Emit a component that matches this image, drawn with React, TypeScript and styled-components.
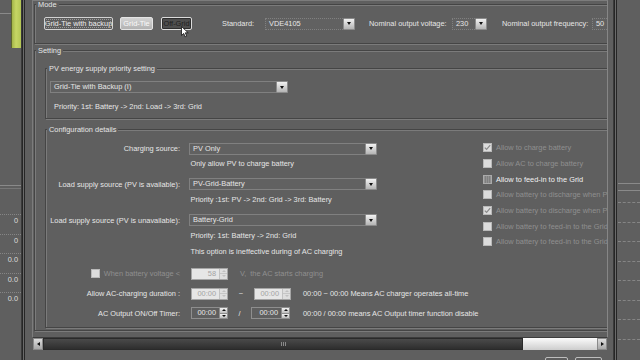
import styled, { createGlobalStyle, css } from "styled-components"

const C = {
	bg: "#5f5f5f",
	dark: "#454545",
	light: "#7b7b7b",
	text: "#e6e6e6",
	muted: "#8f8f8f",
}

const GlobalStyle = createGlobalStyle`
	* { box-sizing: border-box; }
	html, body { margin: 0; padding: 0; background: ${C.bg}; }
	body {
		font-family: "Liberation Sans", Arial, sans-serif;
		font-size: 7.4px;
		color: ${C.text};
		overflow: hidden;
	}
`

const s = {
	Page: styled.div`
		display: flex;
		width: 640px;
		height: 360px;
		overflow: hidden;
		background: ${C.bg};
	`,

	LeftStrip: styled.div`
		width: 21px;
		flex: none;
		display: flex;
		flex-direction: column;
	`,

	LeftTop: styled.div`
		display: flex;
		height: 48px;
		flex: none;
	`,

	TopCell: styled.div`
		width: 11px;
		height: 14px;
		border-bottom: 1px solid #8a8a8a;
	`,

	GreenBar: styled.div`
		width: 10px;
		height: 48px;
		border-left: 1px solid #5d652e;
		background: linear-gradient(to right, #a3b448, #c6d664 45%, #b3c554);
	`,

	LeftHeader: styled.div`
		margin-top: 137px;
		height: 4px;
		border-top: 1px solid #8a8a8a;
		border-bottom: 1px solid #777;
	`,

	LeftRows: styled.div`
		margin-top: 25px;
	`,

	LeftCell: styled.div`
		height: 19.5px;
		border-top: 1px dotted #858585;
		text-align: right;
		padding-right: 3px;
		line-height: 11px;
		color: #dcdcdc;
	`,

	Splitter: styled.div<{ $w: number; $o: number }>`
		width: ${p => p.$w}px;
		flex: none;
		background: linear-gradient(to right,
			transparent 0 ${p => p.$o}px,
			#3a3a3a ${p => p.$o}px ${p => p.$o + 1}px,
			#262626 ${p => p.$o + 1}px ${p => p.$o + 2}px,
			#6a6a6a ${p => p.$o + 2}px ${p => p.$o + 3}px,
			#262626 ${p => p.$o + 3}px ${p => p.$o + 4}px,
			transparent ${p => p.$o + 4}px);
	`,

	MainColumn: styled.div`
		width: 576px;
		flex: none;
		display: flex;
		flex-direction: column;
	`,

	Viewport: styled.div`
		position: relative;
		height: 337px;
		flex: none;
		overflow: hidden;
		border-top: 1px solid #7c7c7c;
		border-left: 1px solid #7c7c7c;
		border-right: 1px solid #868686;
	`,

	Content: styled.div`
		width: 663px;
	`,

	Group: styled.fieldset<{ $mt?: number; $ml?: number }>`
		margin: ${p => p.$mt ?? 0}px 0 0 ${p => p.$ml ?? 0}px;
		padding: 0;
		min-width: 0;
		border: 1px solid ${C.dark};
		box-shadow: inset 1px 1px 0 ${C.light}, 1px 1px 0 ${C.light};
	`,

	Legend: styled.legend`
		margin-left: 1px;
		padding: 0 2px;
		line-height: 9px;
		background: ${C.bg};
		color: ${C.text};
	`,

	ModeRow: styled.div`
		display: flex;
		align-items: center;
		padding: 8px 0 13px 9px;
	`,

	ModeButton: styled.div<{ $variant: "focus" | "plain" | "pressed"; $w: number; $ml?: number }>`
		width: ${p => p.$w}px;
		height: 13px;
		margin-left: ${p => p.$ml ?? 0}px;
		flex: none;
		display: flex;
		align-items: center;
		justify-content: center;
		border-radius: 2px;
		white-space: nowrap;
		${p => p.$variant === "focus" && css`
			border: 1px solid #d2d2d2;
			background: #5c5c5c;
			color: #eeeeee;
			outline: 1px dotted #9a9a9a;
			outline-offset: -3px;
		`}
		${p => p.$variant === "plain" && css`
			border: 1px solid #e4e4e4;
			background: linear-gradient(#d4d4d4, #b2b2b2);
			color: #fafafa;
		`}
		${p => p.$variant === "pressed" && css`
			border: 1px solid #dcdcdc;
			box-shadow: inset 0 0 0 1px #2e2e2e;
			background: #4e4e4e;
			color: #1e1e1e;
		`}
	`,

	ModeLabel: styled.span<{ $w: number; $ml?: number }>`
		width: ${p => p.$w}px;
		margin-left: ${p => p.$ml ?? 0}px;
		flex: none;
		white-space: nowrap;
	`,

	Select: styled.div<{ $w: number; $dotted?: boolean }>`
		display: flex;
		align-items: center;
		flex: none;
		width: ${p => p.$w}px;
		height: 12px;
		border: 1px ${p => (p.$dotted ? "dotted" : "solid")} #808080;
		background: #616161;
		color: ${C.text};
	`,

	SelectValue: styled.span`
		flex: 1;
		padding-left: 3px;
		line-height: 10px;
		white-space: nowrap;
		overflow: hidden;
	`,

	DropButton: styled.span`
		width: 12px;
		height: 12px;
		margin: -1px -1px -1px 0;
		flex: none;
		display: flex;
		align-items: center;
		justify-content: center;
		border: 1px solid #8c8c8c;
		border-radius: 1px;
		background: linear-gradient(#f2f2f2, #b4b4b4);

		&::after {
			content: "";
			border-left: 2.5px solid transparent;
			border-right: 2.5px solid transparent;
			border-top: 3px solid #111;
		}
	`,

	SettingBody: styled.div`
		padding: 0 0 2px 10px;
	`,

	PVBody: styled.div`
		padding: 8.5px 0 7.5px 4px;
	`,

	Note: styled.div<{ $pl?: number; $mt?: number; $muted?: boolean }>`
		padding-left: ${p => p.$pl ?? 0}px;
		margin-top: ${p => p.$mt ?? 0}px;
		line-height: 9px;
		white-space: nowrap;
		color: ${p => (p.$muted ? C.muted : C.text)};
	`,

	ConfigBody: styled.div`
		display: flex;
		padding: 9px 0 8px 0;
	`,

	Form: styled.div`
		width: 437px;
		flex: none;
	`,

	FormRow: styled.div<{ $h?: number; $mt?: number }>`
		display: flex;
		align-items: center;
		height: ${p => p.$h ?? 12}px;
		margin-top: ${p => p.$mt ?? 0}px;
		white-space: nowrap;
	`,

	RowLabel: styled.div<{ $muted?: boolean }>`
		width: 134px;
		margin-right: 9px;
		flex: none;
		display: flex;
		align-items: center;
		justify-content: flex-end;
		gap: 4px;
		color: ${p => (p.$muted ? C.muted : C.text)};
	`,

	Inline: styled.span<{ $ml?: number; $w?: number; $muted?: boolean }>`
		margin-left: ${p => p.$ml ?? 0}px;
		${p => p.$w && css`width: ${p.$w}px; text-align: center;`}
		flex: none;
		color: ${p => (p.$muted ? C.muted : C.text)};
	`,

	Spinner: styled.div<{ $w: number; $ml?: number; $dark?: boolean }>`
		display: flex;
		flex: none;
		width: ${p => p.$w}px;
		height: 12px;
		margin-left: ${p => p.$ml ?? 0}px;
		border: 1px solid ${p => (p.$dark ? "#8e8e8e" : "#a6a6a6")};
		background: ${p => (p.$dark ? C.bg : "#e6e6e6")};
	`,

	SpinValue: styled.span<{ $dark?: boolean }>`
		flex: 1;
		text-align: right;
		padding-right: 3px;
		line-height: 10px;
		color: ${p => (p.$dark ? C.text : "#a3a3a3")};
	`,

	SpinButtons: styled.span<{ $dark?: boolean }>`
		width: 8px;
		flex: none;
		display: flex;
		flex-direction: column;
		border-left: 1px solid ${p => (p.$dark ? "#8e8e8e" : "#c2c2c2")};
	`,

	SpinArrow: styled.span<{ $up?: boolean; $dark?: boolean }>`
		flex: 1;
		display: flex;
		align-items: center;
		justify-content: center;
		background: ${p => (p.$dark ? "linear-gradient(#f2f2f2, #bdbdbd)" : "#dedede")};
		border-top: ${p => (p.$up ? "none" : `1px solid ${p.$dark ? "#8e8e8e" : "#c6c6c6"}`)};

		&::after {
			content: "";
			border-left: 2px solid transparent;
			border-right: 2px solid transparent;
			${p => (p.$up ? "border-bottom" : "border-top")}: 2px solid ${p => (p.$dark ? "#111" : "#c0c0c0")};
		}
	`,

	CheckList: styled.div`
		margin-top: -2.5px;
		display: flex;
		flex-direction: column;
	`,

	CheckItem: styled.div<{ $enabled?: boolean }>`
		height: 15.67px;
		display: flex;
		align-items: center;
		gap: 4px;
		white-space: nowrap;
		color: ${p => (p.$enabled ? "#f2f2f2" : C.muted)};
	`,

	Box: styled.span<{ $enabled?: boolean }>`
		width: 9px;
		height: 9px;
		flex: none;
		display: flex;
		align-items: center;
		justify-content: center;
		border: 1px solid ${p => (p.$enabled ? "#aaaaaa" : "#b9b9b9")};
		background: ${p => (p.$enabled
			? "repeating-linear-gradient(to right, #929292 0 1px, #7f7f7f 1px 2px)"
			: "#dcdcdc")};
	`,

	Cursor: styled.svg`
		position: absolute;
		left: 148px;
		top: 25px;
		width: 8px;
		height: 12px;
	`,

	ScrollBar: styled.div`
		display: flex;
		height: 13px;
		margin-left: 1px;
		width: 574px;
		flex: none;
		border-top: 1px solid #3c3c3c;
	`,

	ScrollButton: styled.div<{ $dir: "left" | "right" }>`
		width: 10px;
		flex: none;
		display: flex;
		align-items: center;
		justify-content: center;
		border: 1px solid #8a8a8a;
		background: linear-gradient(#dcdcdc, #a8a8a8);

		&::after {
			content: "";
			border-top: 2.5px solid transparent;
			border-bottom: 2.5px solid transparent;
			${p => (p.$dir === "left" ? "border-right" : "border-left")}: 3px solid #111;
		}
	`,

	Thumb: styled.div`
		width: 480px;
		flex: none;
		display: flex;
		align-items: center;
		justify-content: center;
		border: 1px solid #2a2a2a;
		background: linear-gradient(#4a4a4a, #2e2e2e);

		&::after {
			content: "";
			width: 5px;
			height: 4px;
			background: repeating-linear-gradient(to right, #8a8a8a 0 1px, transparent 1px 2px);
		}
	`,

	Track: styled.div`
		flex: 1;
		background: linear-gradient(#fbfbfb, #cdcdcd);
	`,

	BottomBar: styled.div`
		flex: 1;
		display: flex;
		justify-content: flex-end;
		gap: 7px;
		padding: 7px 6px 0 0;
	`,

	DialogButton: styled.div<{ $w: number }>`
		width: ${p => p.$w}px;
		height: 14px;
		border: 1px solid #bdbdbd;
		border-radius: 2px;
		background: #5c5c5c;
	`,

	RightStrip: styled.div`
		flex: 1;
		display: flex;
		flex-direction: column;
		padding-top: 183px;
	`,

	RightRule: styled.div<{ $mt?: number }>`
		height: 1px;
		margin-top: ${p => p.$mt ?? 0}px;
		background: #8a8a8a;
	`,

	RightRows: styled.div`
		margin-top: 11px;
	`,

	RightRow: styled.div`
		height: 19.5px;
		border-top: 1px dashed #858585;
	`,
}

const checks = [
	{ label: "Allow to charge battery", checked: true },
	{ label: "Allow AC to charge battery" },
	{ label: "Allow to feed-in to the Grid", enabled: true },
	{ label: "Allow battery to discharge when PV is unavailable" },
	{ label: "Allow battery to discharge when PV is available", checked: true },
	{ label: "Allow battery to feed-in to the Grid when PV is available" },
	{ label: "Allow battery to feed-in to the Grid when PV is unavailable" },
]

function Select({ w, value, dotted }: { w: number; value: string; dotted?: boolean }) {
	return (
		<s.Select $w={w} $dotted={dotted}>
			<s.SelectValue>{value}</s.SelectValue>
			<s.DropButton />
		</s.Select>
	)
}

function Spinner({ w, value, dark, ml }: { w: number; value: string; dark?: boolean; ml?: number }) {
	return (
		<s.Spinner $w={w} $dark={dark} $ml={ml}>
			<s.SpinValue $dark={dark}>{value}</s.SpinValue>
			<s.SpinButtons $dark={dark}>
				<s.SpinArrow $up $dark={dark} />
				<s.SpinArrow $dark={dark} />
			</s.SpinButtons>
		</s.Spinner>
	)
}

function Check({ checked, enabled }: { checked?: boolean; enabled?: boolean }) {
	return (
		<s.Box $enabled={enabled}>
			{checked && (
				<svg width="7" height="7" viewBox="0 0 7 7">
					<path d="M0.8 3.6 L2.6 5.4 L6.2 1.2" fill="none" stroke="#8a8a8a" strokeWidth="1.2" />
				</svg>
			)}
		</s.Box>
	)
}

export default function App() {
	return (
		<>
			<GlobalStyle />
			<s.Page>
				<s.LeftStrip>
					<s.LeftTop>
						<s.TopCell />
						<s.GreenBar />
					</s.LeftTop>
					<s.LeftHeader />
					<s.LeftRows>
						{["0", "0", "0.0", "0.0", "0.0"].map((v, i) => (
							<s.LeftCell key={i}>{v}</s.LeftCell>
						))}
					</s.LeftRows>
				</s.LeftStrip>

				<s.Splitter $w={11} $o={0} />

				<s.MainColumn>
					<s.Viewport>
						<s.Content>
							<s.Group $mt={-1} $ml={1}>
								<s.Legend>Mode</s.Legend>
								<s.ModeRow>
									<s.ModeButton $variant="focus" $w={69}>Grid-Tie with backup</s.ModeButton>
									<s.ModeButton $variant="plain" $w={33} $ml={7}>Grid-Tie</s.ModeButton>
									<s.ModeButton $variant="pressed" $w={31} $ml={8}>Off-Grid</s.ModeButton>
									<s.ModeLabel $w={43} $ml={30}>Standard:</s.ModeLabel>
									<Select w={90} value="VDE4105" dotted />
									<s.ModeLabel $w={83} $ml={14}>Nominal output voltage:</s.ModeLabel>
									<Select w={35} value="230" dotted />
									<s.ModeLabel $w={90} $ml={15}>Nominal output frequency:</s.ModeLabel>
									<Select w={35} value="50" dotted />
								</s.ModeRow>
							</s.Group>

							<s.Group $mt={2} $ml={1}>
								<s.Legend>Setting</s.Legend>
								<s.SettingBody>
									<s.Group $mt={8.5}>
										<s.Legend>PV energy supply priority setting</s.Legend>
										<s.PVBody>
											<Select w={238} value="Grid-Tie with Backup (I)" />
											<s.Note $pl={4} $mt={8.5}>Priority: 1st: Battery -&gt; 2nd: Load -&gt; 3rd: Grid</s.Note>
										</s.PVBody>
									</s.Group>

									<s.Group $mt={5.5}>
										<s.Legend>Configuration details</s.Legend>
										<s.ConfigBody>
											<s.Form>
												<s.FormRow>
													<s.RowLabel>Charging source:</s.RowLabel>
													<Select w={188} value="PV Only" />
												</s.FormRow>
												<s.FormRow $h={16} $mt={0.5}>
													<s.RowLabel />
													<s.Note $pl={1.5}>Only allow PV to charge battery</s.Note>
												</s.FormRow>
												<s.FormRow $mt={7}>
													<s.RowLabel>Load supply source (PV is available):</s.RowLabel>
													<Select w={188} value="PV-Grid-Battery" />
												</s.FormRow>
												<s.FormRow $h={16} $mt={1.5}>
													<s.RowLabel />
													<s.Note $pl={1.5}>Priority :1st: PV -&gt; 2nd: Grid -&gt; 3rd: Battery</s.Note>
												</s.FormRow>
												<s.FormRow $mt={6.5}>
													<s.RowLabel>Load supply source (PV is unavailable):</s.RowLabel>
													<Select w={188} value="Battery-Grid" />
												</s.FormRow>
												<s.FormRow $h={16} $mt={1.5}>
													<s.RowLabel />
													<s.Note $pl={1.5}>Priority: 1st: Battery -&gt; 2nd: Grid</s.Note>
												</s.FormRow>
												<s.FormRow $h={16}>
													<s.RowLabel />
													<s.Note $pl={1.5}>This option is ineffective during of AC charging</s.Note>
												</s.FormRow>
												<s.FormRow $mt={8}>
													<s.RowLabel $muted>
														<Check />
														When battery voltage &lt;
													</s.RowLabel>
													<Spinner w={37} ml={2} value="58" />
													<s.Inline $ml={12} $muted>V,</s.Inline>
													<s.Inline $ml={4} $muted>the AC starts charging</s.Inline>
												</s.FormRow>
												<s.FormRow $mt={8}>
													<s.RowLabel>Allow AC-charging duration :</s.RowLabel>
													<Spinner w={37} ml={2} value="00:00" />
													<s.Inline $w={26}>~</s.Inline>
													<Spinner w={37} value="00:00" />
													<s.Inline $ml={12}>00:00 ~ 00:00 Means AC charger operates all-time</s.Inline>
												</s.FormRow>
												<s.FormRow $mt={7.5}>
													<s.RowLabel>AC Output ON/Off Timer:</s.RowLabel>
													<Spinner w={37} ml={2} value="00:00" dark />
													<s.Inline $w={23}>/</s.Inline>
													<Spinner w={39} value="00:00" dark />
													<s.Inline $ml={13}>00:00 / 00:00 means AC Output timer function disable</s.Inline>
												</s.FormRow>
											</s.Form>

											<s.CheckList>
												{checks.map(c => (
													<s.CheckItem key={c.label} $enabled={c.enabled}>
														<Check checked={c.checked} enabled={c.enabled} />
														{c.label}
													</s.CheckItem>
												))}
											</s.CheckList>
										</s.ConfigBody>
									</s.Group>
								</s.SettingBody>
							</s.Group>
						</s.Content>

						<s.Cursor viewBox="0 0 8 12" aria-hidden={true}>
							<path d="M0.5 0.5 L0.5 9.5 L2.7 7.4 L4.2 10.8 L5.7 10.1 L4.3 6.8 L7.2 6.8 Z" fill="#fff" stroke="#111" strokeWidth="0.8" />
						</s.Cursor>
					</s.Viewport>

					<s.ScrollBar>
						<s.ScrollButton $dir="left" />
						<s.Thumb />
						<s.Track />
						<s.ScrollButton $dir="right" />
					</s.ScrollBar>

					<s.BottomBar>
						<s.DialogButton $w={23} />
						<s.DialogButton $w={27} />
					</s.BottomBar>
				</s.MainColumn>

				<s.Splitter $w={10} $o={5} />

				<s.RightStrip>
					<s.RightRule />
					<s.RightRule $mt={6} />
					<s.RightRows>
						{Array.from({ length: 8 }, (_, i) => <s.RightRow key={i} />)}
					</s.RightRows>
				</s.RightStrip>
			</s.Page>
		</>
	)
}
